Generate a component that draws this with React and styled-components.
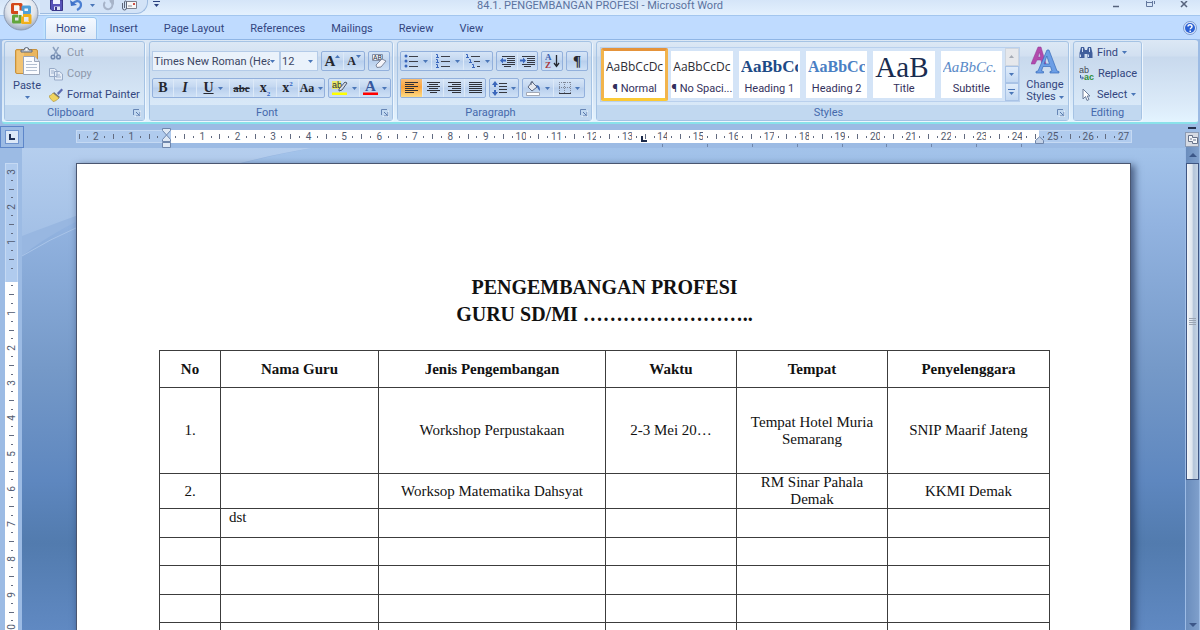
import { Fragment } from "react";
import styled, { createGlobalStyle, css } from "styled-components";

const GlobalStyle = createGlobalStyle`
  * { box-sizing: border-box; }
  body { margin: 0; overflow: hidden; }
  button, select {
    font: inherit;
    color: inherit;
    background: none;
    border: 0;
    padding: 0;
    margin: 0;
  }
  svg { display: block; flex: none; }
`;

const Window = styled.div`
  position: relative;
  display: flex;
  flex-direction: column;
  height: 100vh;
  overflow: hidden;
  background: #9cbbe4;
  color: #33467f;
  font: 11px/13px Roboto, "Open Sans", sans-serif;
`;

/* title bar */

const TitleBar = styled.header`
  display: grid;
  grid-template-columns: 1fr auto 1fr;
  height: 16px;
  flex: none;
  background: linear-gradient(#d5e5f8, #e4f1fe);
  border-bottom: 1px solid #a3c6ee;
`;

const Title = styled.h1`
  margin: 0;
  font-size: 11px;
  line-height: 12px;
  font-weight: 400;
  color: #5b73a0;
`;

const QuickAccess = styled.div`
  display: flex;
  align-items: flex-start;
  padding-left: 40px;
`;

const QuickBar = styled.div`
  display: flex;
  align-items: center;
  gap: 7px;
  height: 14px;
  padding: 0 10px 3px 10px;
  border: 1px solid #9dbbe0;
  border-top: 0;
  border-left: 0;
  border-radius: 0 0 12px 0;
  background: #d3e3f7;
`;

const QuickMore = styled.button`
  padding: 1px 5px;
`;

const WindowButtons = styled.div`
  display: flex;
  justify-content: flex-end;
  gap: 24px;
  padding-right: 11px;
  button { height: 8px; }
`;

const OfficeButton = styled.button`
  position: absolute;
  z-index: 2;
  top: -6px;
  left: 3px;
`;

/* ribbon */

const TabRow = styled.nav`
  display: flex;
  align-items: flex-end;
  height: 23px;
  flex: none;
  padding: 0 4px 0 46px;
  background: #bfdbff;
`;

const Tab = styled.button`
  height: 21px;
  padding: 0 13px;
  border-radius: 3px 3px 0 0;
  ${({ $active }) =>
    $active &&
    css`
      padding: 0 10px;
      margin-right: 1px;
      background: linear-gradient(#f4f9ff, #dfeaf7);
      box-shadow: 0 0 0 1px #9cc4ee, 0 0 3px 1px #c9f3fb;
    `}
`;

const Help = styled.button`
  margin: 0 -1px 4px auto;
`;

const Ribbon = styled.section`
  display: flex;
  gap: 4px;
  flex: none;
  height: 85px;
  margin: 0 2px;
  padding: 1px 2px;
  border: 1px solid #8fb5e5;
  border-color: #8fb5e5 #a9e4f2 #8ae2ea #a9e4f2;
  border-width: 1px 0 2px;
  border-radius: 3px;
  background: linear-gradient(#dce8f5 0, #d0dff0 16px, #c8d9ed 17px, #dcebf9 66px, #e3f4ff);
`;

const GroupBox = styled.section`
  display: flex;
  flex-direction: column;
  flex: none;
  width: ${({ $width }) => $width}px;
  border: 1px solid #a5c3e4;
  border-radius: 3px;
  background: linear-gradient(#dce8f5 0, #d2e0f1 14px, #c8d9ed 15px, #d9e9f8 64px);
  box-shadow: 1px 1px 0 #eef6fe;
`;

const GroupBody = styled.div`
  flex: 1;
  display: flex;
  min-height: 0;
`;

const GroupLabel = styled.div`
  display: flex;
  align-items: center;
  height: 15px;
  padding: 0 3px;
  background: #c1d8f0;
  color: #4569ac;
  span { flex: 1; text-align: center; }
`;

const Stack = styled.div`
  display: flex;
  flex-direction: column;
  padding-left: ${({ $inset }) => $inset || 0}px;
`;

const BigButton = styled.button`
  display: flex;
  flex: none;
  flex-direction: column;
  align-items: center;
  width: ${({ $width }) => $width}px;
  padding-top: 4px;
  line-height: 12px;
  > svg:first-child { margin-bottom: 4px; }
  > svg:last-child { margin-top: 4px; }
  span { display: flex; align-items: center; gap: 3px; }
`;

const SmallButton = styled.button`
  display: flex;
  align-items: center;
  gap: 4px;
  height: 21px;
  white-space: nowrap;
  color: ${({ disabled }) => (disabled ? "#8d98ab" : "#33467f")};
`;

const Rows = styled.div`
  display: flex;
  flex-direction: column;
  gap: 7px;
  padding: 9px 2px 0;
  width: 100%;
`;

const ToolRow = styled.div`
  display: flex;
  height: 20px;
  gap: 3px;
`;

const Combo = styled.label`
  display: flex;
  align-items: center;
  width: ${({ $width }) => $width}px;
  height: 20px;
  margin-right: ${({ $joined }) => ($joined ? "-3px" : "0")};
  padding-right: 4px;
  border: 1px solid #b4cbe8;
  background: #eaf2fb;
  color: #3b4663;
  select {
    flex: 1;
    min-width: 0;
    padding-left: 1px;
    appearance: none;
    outline: 0;
    overflow: hidden;
  }
`;

const ToolGroup = styled.div`
  display: flex;
  border: 1px solid #92b0dc;
  border-radius: 2px;
  background: linear-gradient(#d6e5f7, #c3d7f0 45%, #b8cfed 50%, #cfe1f6);
`;

const Tool = styled.button`
  display: flex;
  align-items: center;
  justify-content: center;
  gap: 4px;
  width: ${({ $width }) => $width}px;
  & + & { border-left: 1px solid #dce9f8; }
  ${({ $active }) => $active && css`
    background: linear-gradient(#f6bd77, #fba43c 45%, #fddc85);
  `}
`;

const SizeTool = styled(Tool)`
  gap: 0;
  svg { align-self: flex-start; margin-top: 3px; }
`;

const Glyph = styled.span`
  font: ${({ $size }) => $size || 14}px/18px "Liberation Serif", serif;
  font-weight: 700;
  font-style: ${({ $italic }) => ($italic ? "italic" : "normal")};
  text-decoration: ${({ $line }) => $line || "none"};
  color: #25272f;
  sub, sup { font-size: 7px; line-height: 0; color: #2d5fc0; }
`;

/* style gallery */

const Gallery = styled.div`
  display: flex;
  flex: 1;
  min-width: 0;
  margin: 5px 2px 3px 3px;
  border: 1px solid #b9d0ed;
  background: #d4e4f7;
`;

const StyleTile = styled.button`
  flex: 1;
  min-width: 0;
  display: flex;
  flex-direction: column;
  border: 3px solid transparent;
  ${({ $active }) => $active && css`
    border-color: #e5933a #f2b44c #fbc935;
    border-radius: 2px;
  `}
`;

const TileFace = styled.span`
  display: flex;
  flex-direction: column;
  align-self: stretch;
  flex: 1;
  overflow: hidden;
  background: #fff;
`;

const Preview = styled.span`
  height: 30px;
  margin: 0 2px;
  overflow: hidden;
  text-align: left;
  white-space: nowrap;
  line-height: 32px;
  font-family: ${({ $serif }) =>
    $serif ? '"Liberation Serif", serif' : '"Open Sans", sans-serif'};
  font-size: ${({ $size }) => $size}px;
  font-weight: ${({ $bold }) => ($bold ? 700 : 400)};
  font-style: ${({ $italic }) => ($italic ? "italic" : "normal")};
  color: ${({ $color }) => $color};
`;

const TileName = styled.span`
  text-align: center;
  white-space: nowrap;
  line-height: 15px;
  color: #33305c;
`;

const GalleryScroll = styled.div`
  display: flex;
  flex-direction: column;
  width: 14px;
  button {
    flex: 1;
    display: flex;
    align-items: center;
    justify-content: center;
    border: 1px solid #a9c3e6;
    background: linear-gradient(#e0ecfa, #c3d8f2);
  }
  button:first-child { background: #e6e8ec; border-color: #cdd5df; }
`;

/* rulers and document */

const Main = styled.div`
  display: flex;
  flex: 1;
  min-height: 0;
  padding-top: 2px;
`;

const Editor = styled.div`
  display: flex;
  flex-direction: column;
  flex: 1;
  min-width: 0;
`;

const RulerRow = styled.div`
  display: flex;
  align-items: flex-start;
  height: 22px;
  flex: none;
`;

const TabSelector = styled.button`
  display: flex;
  align-items: center;
  justify-content: center;
  width: 24px;
  height: 22px;
  margin-right: 52px;
  border: 1px solid #5d86c9;
  span {
    display: flex;
    align-items: center;
    justify-content: center;
    width: 14px;
    height: 14px;
    border: 1px solid #6f94cf;
    background: #dce8f8;
  }
`;

const HRuler = styled.div`
  position: relative;
  display: flex;
  flex: 1;
  height: 13px;
  margin: 4px 53px 0 0;
  padding-right: 4px;
  background: #b0cbee;
  box-shadow: inset 0 0 0 1px #c5d9f3;
`;

const VRuler = styled.div`
  display: flex;
  flex-direction: column;
  width: 13px;
  margin: 15px 4px -4px 5px;
  padding-top: 4px;
  background: #b0cbee;
  box-shadow: inset 0 0 0 1px #c5d9f3;
`;

const Mark = styled.span`
  display: flex;
  align-items: center;
  justify-content: center;
  flex: ${({ $half }) => ($half ? 3 : 4)} 1 0;
  min-width: 0;
  min-height: 0;
  font-size: 10px;
  line-height: 13px;
  color: #515a70;
  background: ${({ $inside }) => ($inside ? "#fff" : "none")};
  ${({ $vertical }) => $vertical && css`
    writing-mode: sideways-lr;
    line-height: 12px;
  `}
`;

const Tick = styled.i`
  flex: none;
  background: #626b80;
  width: ${({ $long, $vertical }) => ($long && $vertical ? 5 : $vertical ? 2 : 1)}px;
  height: ${({ $long, $vertical }) => ($long && !$vertical ? 5 : $vertical ? 1 : 2)}px;
`;

const Indent = styled.span`
  position: absolute;
  top: ${({ $top }) => $top}px;
  left: ${({ $left }) => $left}%;
  margin-left: -5px;
`;

const DefaultTabs = styled.span`
  position: absolute;
  top: 14px;
  left: 55%;
  right: 10%;
  height: 3px;
  display: flex;
  justify-content: space-between;
  padding: 0 4px 0 5px;
  i { width: 1px; background: #6f86ab; }
`;

const Workspace = styled.div`
  display: flex;
  flex: 1;
  min-height: 0;
  overflow: hidden;
`;

const Canvas = styled.main`
  position: relative;
  display: flex;
  flex: 1;
  min-width: 0;
  padding: 15px 54px 0;
  background: linear-gradient(#a3c3ea 0, #92b3e0 16%, #7599c8 46%, #5e87bf 69%, #527bae 82%, #6089c2 100%);
`;

const Swoosh = styled.svg`
  position: absolute;
  top: 0;
  left: 0;
  width: 290px;
  height: 110px;
`;

const Page = styled.article`
  position: relative;
  flex: 1;
  min-width: 0;
  padding: 110px 80px 0 82px;
  border: 1px solid #4a5670;
  border-bottom: 0;
  background: #fff;
  box-shadow: 3px 3px 7px 1px rgba(20, 35, 70, 0.6);
  color: #111;
  font: 15px/17px "Liberation Serif", "Times New Roman", serif;
`;

const Heading = styled.h2`
  margin: 0 0 22px;
  font-size: 20px;
  line-height: 27px;
  text-align: center;
`;

const Table = styled.table`
  width: 100%;
  border-collapse: collapse;
  table-layout: fixed;
  th, td {
    padding: 0 8px;
    border: 1px solid #3c3c3c;
    text-align: center;
    vertical-align: middle;
  }
`;

const Row = styled.tr`
  height: ${({ $height }) => $height}px;
`;

const Note = styled.td`
  && { text-align: left; vertical-align: top; }
`;

const ScrollColumn = styled.div`
  display: flex;
  flex-direction: column;
  flex: none;
  width: 14px;
  margin-right: 1px;
`;

const Splitter = styled.div`
  height: 2px;
  margin: 1px 3px 3px;
  background: #26344f;
`;

const RulerToggle = styled.button`
  display: flex;
  align-items: center;
  justify-content: center;
  height: 15px;
  flex: none;
  border: 1px solid #8c9bb4;
  background: #d5dae3;
`;

const Track = styled.div`
  display: flex;
  flex-direction: column;
  flex: 1;
  min-height: 0;
  border-left: 1px solid #9dbce6;
  background: linear-gradient(90deg, #6a8dbd, #7f9fcb);
`;

const ScrollArrow = styled.button`
  display: flex;
  align-items: center;
  justify-content: center;
  height: ${({ $height }) => $height}px;
  flex: none;
`;

const Thumb = styled.div`
  display: flex;
  flex: 316 1 0;
  align-items: center;
  justify-content: center;
  border: 1px solid #3f5682;
  background: linear-gradient(90deg, #f2f5f9, #dfe6ee 45%, #b4c5d9 60%, #c6d5e6);
`;

const ThumbRest = styled.div`
  flex: 141 1 0;
`;

const Arrow = ({ up, color = "#4a76b8" }) => (
  <svg width="5" height="3" viewBox="0 0 5 3" aria-hidden="true">
    <path d={up ? "M0 3h5L2.5 0z" : "M0 0h5L2.5 3z"} fill={color} />
  </svg>
);

const MoreArrow = ({ color = "#4a76b8" }) => (
  <svg width="7" height="7" viewBox="0 0 7 7" aria-hidden="true">
    <path d="M0 .5h7" stroke={color} />
    <path d="M1 3h5L3.500 6z" fill={color} />
  </svg>
);

const Launcher = () => (
  <svg width="8" height="8" viewBox="0 0 8 8" aria-hidden="true">
    <path d="M.5 6V.5H6" fill="none" stroke="#6786b5" />
    <path d="M3 3l3 3M7 3v4H3" fill="none" stroke="#5878ab" />
    <path d="M1.500 7.500h6v-6" fill="none" stroke="#f4f9ff" strokeWidth=".6" />
  </svg>
);

const OfficeLogo = () => (
  <svg width="37" height="37" viewBox="0 0 37 37" aria-hidden="true">
    <defs>
      <radialGradient id="orb" cx=".5" cy=".35" r=".65">
        <stop offset="0" stopColor="#fff" />
        <stop offset=".65" stopColor="#dfe4ec" />
        <stop offset="1" stopColor="#9caac0" />
      </radialGradient>
    </defs>
    <circle cx="18" cy="19" r="17" fill="url(#orb)" stroke="#8d9bb3" />
    <g fill="none" strokeWidth="3" strokeLinejoin="round">
      <path d="M15 18.500H9.500v-8H18v6" stroke="#d3481c" />
      <path d="M20 18.500h6.500v-5.500H20v4" stroke="#4f9fd8" />
      <path d="M17 21v7h-6.500v-6H15" stroke="#62a63c" />
      <path d="M20 21.500h7v7h-7.500v-6" stroke="#f0b01c" />
    </g>
    <path d="M11 11.500h5M21 27.500h5" stroke="#fbd9a0" />
  </svg>
);

const SaveIcon = () => (
  <svg width="13" height="11" viewBox="0 0 13 11" aria-hidden="true">
    <path d="M.5 0h12v10.500H2L.5 9z" fill="#5753b8" stroke="#3a3789" />
    <path d="M3 0h7v4H3z" fill="#eef2ff" />
    <path d="M4 6.500h6V10H4z" fill="#dfe4f5" />
    <path d="M5 7h2v3H5z" fill="#3a3789" />
  </svg>
);

const UndoIcon = ({ redo }) =>
  redo ? (
    <svg width="12" height="11" viewBox="0 0 12 11" aria-hidden="true">
      <path d="M8 1a4.300 4.300 0 1 1-5 1" fill="none" stroke="#a7b4c9" strokeWidth="2" />
      <path d="M7 0h5v5z" fill="#a7b4c9" />
    </svg>
  ) : (
    <svg width="13" height="11" viewBox="0 0 13 11" aria-hidden="true">
      <path d="M3 3c5-4 8-1 8 2S9 9 7 10" fill="none" stroke="#4b7fd2" strokeWidth="2.200" />
      <path d="M0 0l1 6 6-1z" fill="#3d70c8" />
    </svg>
  );

const MailIcon = () => (
  <svg width="16" height="11" viewBox="0 0 16 11" aria-hidden="true">
    <path d="M5.500 1.500h10v7h-10z" fill="#f7f7f7" stroke="#7c7f8c" />
    <path d="M7 6h4" stroke="#8b8f9c" />
    <path d="M12 3h2v2h-2z" fill="#d04e42" />
    <path d="M1.500 3v5a2 2 0 0 0 4 0V2a1 1 0 0 0-2 0v6" fill="none" stroke="#5c6577" />
  </svg>
);

const HelpIcon = () => (
  <svg width="14" height="14" viewBox="0 0 14 14" aria-hidden="true">
    <circle cx="7" cy="7" r="6.500" fill="#dce8fa" stroke="#7d9bd0" />
    <circle cx="7" cy="7" r="5" fill="#2b61d4" />
    <path d="M5 5.500c0-2.500 4-2.300 4 0C9 7 7.200 7 7.200 8.300M7.200 9.500V11" fill="none" stroke="#fff" strokeWidth="1.500" />
  </svg>
);

const PasteIcon = () => (
  <svg width="27" height="30" viewBox="0 0 27 30" aria-hidden="true">
    <rect x="1.500" y="3.500" width="22" height="24" rx="1.500" fill="#eab65e" stroke="#c9923c" />
    <path d="M3 5h7v22H3z" fill="#f3c97e" opacity=".7" />
    <path d="M7 6V4h3a2.500 2.500 0 0 1 5 0h3v2z" fill="#ced3da" stroke="#5e6878" />
    <circle cx="12.500" cy="3.500" r="1" fill="#fff" />
    <path d="M9.500 10.500h11l5 5v13h-16z" fill="#fbfcff" stroke="#9aa5b8" />
    <path d="M20.500 10.500v5h5" fill="#dbe3ef" stroke="#9aa5b8" />
    <path d="M12 15.500h6M12 18.500h11M12 21.500h11M12 24.500h11" stroke="#b3bfd1" />
  </svg>
);

const CutIcon = () => (
  <svg width="14" height="14" viewBox="0 0 14 14" aria-hidden="true">
    <path d="M4 1l5 8M9.500 1L5 9" fill="none" stroke="#8ba0bf" strokeWidth="1.500" />
    <circle cx="4" cy="11" r="1.800" fill="none" stroke="#7089b0" strokeWidth="1.500" />
    <circle cx="9.500" cy="11" r="1.800" fill="none" stroke="#7089b0" strokeWidth="1.500" />
  </svg>
);

const CopyIcon = () => (
  <svg width="14" height="14" viewBox="0 0 14 14" aria-hidden="true">
    <path d="M.5 1.500h5l2.500 2v6H.5zM5.500 4.500h5l3 2.500v6h-8z" fill="#e4ecf7" stroke="#97aac7" />
    <path d="M2 4h3M2 6h3M7 8h4M7 10h5" stroke="#9fb2ce" />
  </svg>
);

const PainterIcon = () => (
  <svg width="14" height="14" viewBox="0 0 14 14" aria-hidden="true">
    <path d="M8 5l4.500-4.500L14 2 9.500 7z" fill="#5b6bb0" />
    <path d="M5 4l6 5-2 2-6-4z" fill="#6c6f7c" />
    <path d="M4 5l6 5c-2 2-4 3.500-6 3.500C3 12 1 11 0 8c1.500-.5 3-1.500 4-3z" fill="#f0d35f" stroke="#a88f35" strokeWidth=".6" />
  </svg>
);

const EraserIcon = () => (
  <svg width="16" height="16" viewBox="0 0 16 16" aria-hidden="true">
    <path d="M1.500 1.500h10v6h-10z" fill="#eef2f8" stroke="#8390a8" />
    <text x="2" y="7" fontSize="7" fontFamily="Roboto" fill="#2b3345">AB</text>
    <path d="M5 12l6-6 4 2-5 6-4 .5z" fill="#f5f5fa" stroke="#7e879b" />
  </svg>
);

/* rows of a list: each has a coloured bullet or digit and a black line */
const ListIcon = ({ kind }) => {
  const indent = kind === "multi" ? 3 : 0;
  return (
    <svg width="15" height="14" viewBox="0 0 15 14" aria-hidden="true">
      {[2, 7, 12].map((y, i) => (
        <Fragment key={y}>
          {kind === "bullets" ? (
            <circle cx="2" cy={y} r="1.500" fill="#3a66bb" />
          ) : (
            <path d={`M${i * indent} ${y - 1.5}h1.500v3M${i * indent} ${y + 1.5}h3`} fill="none" stroke="#3a66bb" />
          )}
          <path d={`M${5 + i * indent} ${y + 0.5}h${9 - i * indent}`} stroke="#3c3f49" />
        </Fragment>
      ))}
    </svg>
  );
};

const alignments = {
  left: [[0, 13], [0, 9], [0, 13], [0, 9], [0, 13], [0, 9]],
  center: [[0, 13], [2, 9], [0, 13], [2, 9], [0, 13], [3, 7]],
  right: [[0, 13], [4, 9], [0, 13], [4, 9], [0, 13], [4, 9]],
  justify: [[0, 13], [0, 13], [0, 13], [0, 13], [0, 13], [0, 13]],
};

const AlignIcon = ({ align }) => (
  <svg width="13" height="12" viewBox="0 0 13 12" aria-hidden="true">
    {alignments[align].map(([x, w], i) => (
      <path key={i} d={`M${x} ${i * 2 + 0.5}h${w}`} stroke="#2f3138" />
    ))}
  </svg>
);

const IndentIcon = ({ more }) => (
  <svg width="15" height="13" viewBox="0 0 15 13" aria-hidden="true">
    <path d="M2 1.500h13M7 3.500h8M7 5.500h8M7 7.500h8M2 9.500h13M4 11.500h7" stroke="#353841" />
    <path d={more ? "M6 5.500L3 2.500v2H0v2h3v2z" : "M0 5.500l3-3v2h3v2H3v2z"} fill="#3a66bb" />
  </svg>
);

const SortIcon = () => (
  <svg width="15" height="16" viewBox="0 0 15 16" aria-hidden="true">
    <text x="0" y="7" fontSize="9" fontWeight="700" fontFamily="Liberation Serif" fill="#3a5fae">A</text>
    <text x="0" y="15" fontSize="9" fontWeight="700" fontFamily="Liberation Serif" fill="#a8373c">Z</text>
    <path d="M11.500 2v10M9 10l2.500 3.500L14 10" fill="none" stroke="#25272f" strokeWidth="1.300" />
  </svg>
);

const SpacingIcon = () => (
  <svg width="15" height="15" viewBox="0 0 15 15" aria-hidden="true">
    <path d="M3 0L0 4h2v2h2V4h2zM3 15l-3-4h2V9h2v2h2z" fill="#3a66bb" />
    <path d="M7 2.500h8M7 5.500h8M7 8.500h8M7 11.500h8" stroke="#35383f" />
  </svg>
);

const BucketIcon = () => (
  <svg width="15" height="15" viewBox="0 0 15 15" aria-hidden="true">
    <path d="M6 1l5 5-5 4-4-4z" fill="#e6e9ef" stroke="#5f6a80" />
    <path d="M5 4V1.500a1 1 0 0 1 2 0" fill="none" stroke="#5f6a80" />
    <path d="M10 4c3 0 4 2 4 6-1-1-2-2-3-4z" fill="#3f69b4" />
    <path d="M.5 11.500h13v3H.5z" fill="#fff" stroke="#a3a9b5" />
  </svg>
);

const BorderIcon = () => (
  <svg width="12" height="12" viewBox="0 0 12 12" aria-hidden="true">
    <path d="M.5 0v11M5.500 0v11M11.500 0v11M0 .5h12M0 5.500h12" stroke="#7e8797" strokeDasharray="1 1" />
    <path d="M0 11.500h12" stroke="#353841" />
  </svg>
);

const HighlightIcon = () => (
  <svg width="16" height="16" viewBox="0 0 16 16" aria-hidden="true">
    <path d="M0 1h9v8H0z" fill="#e8ea68" />
    <text x="0" y="8" fontSize="9" fontFamily="Liberation Sans" fill="#2d3038">ab</text>
    <path d="M7 9l6-7 2 1-5 7-3 1z" fill="#d5dce8" stroke="#4d596e" />
    <path d="M0 12.500h15V15H0z" fill="#ff0" />
  </svg>
);

const FontColorIcon = () => (
  <svg width="15" height="16" viewBox="0 0 15 16" aria-hidden="true">
    <text x="2" y="11" fontSize="15" fontWeight="700" fontFamily="Liberation Serif" fill="#35589e">A</text>
    <path d="M0 12.500h15V15H0z" fill="red" />
  </svg>
);

const ChangeStylesIcon = () => (
  <svg width="29" height="29" viewBox="0 0 29 29" aria-hidden="true">
    <path d="M0 18L7 1h3l5 17h-4l-1-4H6l-2 4zM7 11h2.500L8.500 6z" fill="#b24aad" stroke="#8f3a94" strokeWidth=".5" />
    <path d="M5 27v-1.500l2-.5L16 4h2l8 21 2 .5V27h-9v-1.500l2-.5-1.500-4.500H12L10.500 25l2 .5V27zM13 18h5.500L15.800 10z" fill="#6c9ee6" stroke="#376bb9" strokeWidth=".7" />
  </svg>
);

const FindIcon = () => (
  <svg width="14" height="13" viewBox="0 0 14 13" aria-hidden="true">
    <path d="M2 1h3l1 3h2l1-3h3l1.500 6v5h-5V8h-3v4h-5V7z" fill="#415f9c" />
    <path d="M1.500 8.500v2.500M3.500 2v4M10.500 2v4M9.500 8.500v2.500" stroke="#cfdcf2" />
  </svg>
);

const ReplaceIcon = () => (
  <svg width="15" height="15" viewBox="0 0 15 15" aria-hidden="true">
    <text x="0" y="7" fontSize="9" fontFamily="Liberation Sans" fill="#454a55">ab</text>
    <text x="5" y="14" fontSize="9" fontWeight="700" fontFamily="Liberation Sans" fill="#2f8f3a">ac</text>
    <path d="M1.500 9v3H4M3 10.500L4.500 12 3 13.500" fill="none" stroke="#3c61a8" />
  </svg>
);

const SelectIcon = () => (
  <svg width="14" height="14" viewBox="0 0 14 14" aria-hidden="true">
    <path d="M4 1v10l2.500-2.500L8 12.500l2-1-1.800-3.500H11z" fill="#fff" stroke="#6c7c99" />
  </svg>
);

const Group = ({ label, width, launcher, children }) => (
  <GroupBox $width={width} aria-label={label}>
    <GroupBody>{children}</GroupBody>
    <GroupLabel>
      <span>{label}</span>
      {launcher && (
        <button aria-label={`${label} options`}>
          <Launcher />
        </button>
      )}
    </GroupLabel>
  </GroupBox>
);

const tabs = ["Home", "Insert", "Page Layout", "References", "Mailings", "Review", "View"];

const styles = [
  { name: "¶ Normal", sample: "AaBbCcDc", size: 12, color: "#2c2c34" },
  { name: "¶ No Spaci...", sample: "AaBbCcDc", size: 12, color: "#2c2c34" },
  { name: "Heading 1", sample: "AaBbCc", size: 17, color: "#1d4a86", serif: true, bold: true },
  { name: "Heading 2", sample: "AaBbCc", size: 16, color: "#4a80c4", serif: true, bold: true },
  { name: "Title", sample: "AaB", size: 29, color: "#1a2c50", serif: true },
  { name: "Subtitle", sample: "AaBbCc.", size: 15, color: "#5a8ac8", serif: true, italic: true },
];

const columns = [
  { title: "No", width: 61 },
  { title: "Nama Guru", width: 158 },
  { title: "Jenis Pengembangan", width: 227 },
  { title: "Waktu", width: 131 },
  { title: "Tempat", width: 151 },
  { title: "Penyelenggara", width: 162 },
];
const totalWidth = columns.reduce((sum, c) => sum + c.width, 0);

const entries = [
  {
    height: 86,
    cells: ["1.", "", "Workshop Perpustakaan", "2-3 Mei 20…", "Tempat Hotel Muria Semarang", "SNIP Maarif Jateng"],
  },
  {
    height: 35,
    cells: ["2.", "", "Worksop Matematika Dahsyat", "", "RM Sinar Pahala Demak", "KKMI Demak"],
  },
];
const emptyRows = [28, 29, 28, 29];

/* one mark per quarter of a centimetre, zero at the margin */
const Marks = ({ from, to, insideTo, vertical }) => {
  const quarters = Array.from({ length: to - from + 1 }, (_, i) => from + i);
  return quarters.map((q) => (
    <Mark
      key={q}
      $inside={q > 0 && q <= insideTo}
      $vertical={vertical}
      $half={!vertical && q === from}
    >
      {q === 0 ? null : q % 4 === 0 ? (
        Math.abs(q / 4)
      ) : (
        <Tick $long={q % 2 === 0} $vertical={vertical} />
      )}
    </Mark>
  ));
};

const ClipboardGroup = () => (
  <Group label="Clipboard" width={141} launcher>
    <BigButton $width={44}>
      <PasteIcon />
      <span>Paste</span>
      <Arrow />
    </BigButton>
    <Stack>
      <SmallButton disabled><CutIcon />Cut</SmallButton>
      <SmallButton disabled><CopyIcon />Copy</SmallButton>
      <SmallButton><PainterIcon />Format Painter</SmallButton>
    </Stack>
  </Group>
);

const FontGroup = () => (
  <Group label="Font" width={244} launcher>
    <Rows>
      <ToolRow>
        <Combo $width={128} $joined>
          <select aria-label="Font">
            <option>Times New Roman (Headings)</option>
          </select>
          <Arrow />
        </Combo>
        <Combo $width={42}>
          <select aria-label="Font size">
            <option>12</option>
          </select>
          <Arrow />
        </Combo>
        <ToolGroup>
          <SizeTool $width={21} aria-label="Grow font"><Glyph $size={15}>A</Glyph><Arrow up /></SizeTool>
          <SizeTool $width={21} aria-label="Shrink font"><Glyph $size={12}>A</Glyph><Arrow /></SizeTool>
        </ToolGroup>
        <ToolGroup>
          <Tool $width={20} aria-label="Clear formatting"><EraserIcon /></Tool>
        </ToolGroup>
      </ToolRow>
      <ToolRow>
        <ToolGroup>
          <Tool $width={20} aria-label="Bold"><Glyph>B</Glyph></Tool>
          <Tool $width={23} aria-label="Italic"><Glyph $italic>I</Glyph></Tool>
          <Tool $width={33} aria-label="Underline"><Glyph $line="underline">U</Glyph><Arrow /></Tool>
          <Tool $width={24} aria-label="Strikethrough"><Glyph $size={11} $line="line-through">abc</Glyph></Tool>
          <Tool $width={23} aria-label="Subscript"><Glyph>x<sub>2</sub></Glyph></Tool>
          <Tool $width={22} aria-label="Superscript"><Glyph>x<sup>2</sup></Glyph></Tool>
          <Tool $width={26} aria-label="Change case"><Glyph $size={12}>Aa</Glyph><Arrow /></Tool>
        </ToolGroup>
        <ToolGroup>
          <Tool $width={30} aria-label="Highlight"><HighlightIcon /><Arrow /></Tool>
          <Tool $width={31} aria-label="Font color"><FontColorIcon /><Arrow /></Tool>
        </ToolGroup>
      </ToolRow>
    </Rows>
  </Group>
);

const ParagraphGroup = () => (
  <Group label="Paragraph" width={195} launcher>
    <Rows>
      <ToolRow>
        <ToolGroup>
          <Tool $width={30} aria-label="Bullets"><ListIcon kind="bullets" /><Arrow /></Tool>
          <Tool $width={32} aria-label="Numbering"><ListIcon kind="numbers" /><Arrow /></Tool>
          <Tool $width={29} aria-label="Multilevel list"><ListIcon kind="multi" /><Arrow /></Tool>
        </ToolGroup>
        <ToolGroup>
          <Tool $width={20} aria-label="Decrease indent"><IndentIcon /></Tool>
          <Tool $width={20} aria-label="Increase indent"><IndentIcon more /></Tool>
        </ToolGroup>
        <ToolGroup>
          <Tool $width={20} aria-label="Sort"><SortIcon /></Tool>
        </ToolGroup>
        <ToolGroup>
          <Tool $width={20} aria-label="Show marks"><Glyph $size={15}>¶</Glyph></Tool>
        </ToolGroup>
      </ToolRow>
      <ToolRow>
        <ToolGroup>
          {Object.keys(alignments).map((align) => (
            <Tool key={align} $width={21} $active={align === "left"} aria-label={`Align ${align}`}>
              <AlignIcon align={align} />
            </Tool>
          ))}
        </ToolGroup>
        <ToolGroup>
          <Tool $width={28} aria-label="Line spacing"><SpacingIcon /><Arrow /></Tool>
        </ToolGroup>
        <ToolGroup>
          <Tool $width={30} aria-label="Shading"><BucketIcon /><Arrow /></Tool>
          <Tool $width={31} aria-label="Borders"><BorderIcon /><Arrow /></Tool>
        </ToolGroup>
      </ToolRow>
    </Rows>
  </Group>
);

const StylesGroup = () => (
  <Group label="Styles" width={473} launcher>
    <Gallery>
      {styles.map((s, i) => (
        <StyleTile key={s.name} $active={i === 0}>
          <TileFace>
            <Preview $size={s.size} $color={s.color} $serif={s.serif} $bold={s.bold} $italic={s.italic}>
              {s.sample}
            </Preview>
            <TileName>{s.name}</TileName>
          </TileFace>
        </StyleTile>
      ))}
      <GalleryScroll>
        <button aria-label="Previous styles"><Arrow up color="#a6abb5" /></button>
        <button aria-label="Next styles"><Arrow /></button>
        <button aria-label="More styles"><MoreArrow /></button>
      </GalleryScroll>
    </Gallery>
    <BigButton $width={46}>
      <ChangeStylesIcon />
      <span>Change</span>
      <span>Styles <Arrow /></span>
    </BigButton>
  </Group>
);

const EditingGroup = () => (
  <Group label="Editing" width={69}>
    <Stack $inset={5}>
      <SmallButton><FindIcon />Find <Arrow /></SmallButton>
      <SmallButton><ReplaceIcon />Replace</SmallButton>
      <SmallButton><SelectIcon />Select <Arrow /></SmallButton>
    </Stack>
  </Group>
);

export default function App() {
  return (
    <Window>
      <GlobalStyle />
      <TitleBar>
        <QuickAccess>
          <QuickBar>
            <button aria-label="Save"><SaveIcon /></button>
            <button aria-label="Undo"><UndoIcon /></button>
            <button aria-label="Undo history"><Arrow /></button>
            <button aria-label="Redo"><UndoIcon redo /></button>
            <button aria-label="E-mail"><MailIcon /></button>
          </QuickBar>
          <QuickMore aria-label="Customize toolbar"><MoreArrow color="#2b4280" /></QuickMore>
        </QuickAccess>
        <Title>84.1. PENGEMBANGAN PROFESI - Microsoft Word</Title>
        <WindowButtons>
          <button aria-label="Minimize">
            <svg width="10" height="7" viewBox="0 0 10 7"><path d="M2 5.500h6" stroke="#56637d" strokeWidth="1.500" /></svg>
          </button>
          <button aria-label="Restore">
            <svg width="10" height="7" viewBox="0 0 10 7"><path d="M1.500 0v5.500h6V0M1 1.500h7M9.500 0v3" fill="none" stroke="#64789e" /></svg>
          </button>
          <button aria-label="Close">
            <svg width="10" height="7" viewBox="0 0 10 7"><path d="M2 0l6 6M8 0L2 6" stroke="#56637d" strokeWidth="1.500" /></svg>
          </button>
        </WindowButtons>
      </TitleBar>
      <OfficeButton aria-label="Office"><OfficeLogo /></OfficeButton>
      <TabRow>
        {tabs.map((tab, i) => (
          <Tab key={tab} $active={i === 0}>{tab}</Tab>
        ))}
        <Help aria-label="Help"><HelpIcon /></Help>
      </TabRow>
      <Ribbon>
        <ClipboardGroup />
        <FontGroup />
        <ParagraphGroup />
        <StylesGroup />
        <EditingGroup />
      </Ribbon>
      <Main>
        <Editor>
          <RulerRow>
            <TabSelector aria-label="Tab stop type">
              <span>
                <svg width="6" height="6" viewBox="0 0 6 6"><path d="M1 0v5h5" fill="none" stroke="#1e2f55" strokeWidth="2" /></svg>
              </span>
            </TabSelector>
            <HRuler>
              <Marks from={-10} to={108} insideTo={98} />
              <Indent $top={-2} $left={8.6}>
                <svg width="9" height="20" viewBox="0 0 9 20">
                  <path d="M.5.5h8v2L4.500 7l-4-4.500zM.5 13.500v-2L4.500 7l4 4.500v2zM.5 14.500h8v5h-8z" fill="#dfe8f4" stroke="#6f86ab" />
                </svg>
              </Indent>
              <Indent $top={6} $left={91.3}>
                <svg width="9" height="8" viewBox="0 0 9 8">
                  <path d="M.5 7.500V4.500L4.500.8l4 3.700v3z" fill="#c5d3e8" stroke="#6f86ab" />
                </svg>
              </Indent>
              <Indent $top={6} $left={54}>
                <svg width="6" height="6" viewBox="0 0 6 6"><path d="M1 0v5h5" fill="none" stroke="#1c2a4a" strokeWidth="2" /></svg>
              </Indent>
              <DefaultTabs>
                {Array.from({ length: 9 }, (_, i) => <i key={i} />)}
              </DefaultTabs>
            </HRuler>
          </RulerRow>
          <Workspace>
            <VRuler>
              <Marks from={-12} to={40} insideTo={40} vertical />
            </VRuler>
            <Canvas>
              <Swoosh viewBox="0 0 290 110" aria-hidden="true">
                <defs>
                  <linearGradient id="sky" x1="0" y1="0" x2="0" y2="1">
                    <stop offset="0" stopColor="#b5ceee" />
                    <stop offset="1" stopColor="#a3c0e6" />
                  </linearGradient>
                </defs>
                <path d="M0 0h290C190 18 60 58 0 108z" fill="#98b7e1" />
                <path d="M0 108Q28 91 56 79" fill="none" stroke="#a9c4e8" />
                <path d="M0 0h290C190 16 80 58 0 88z" fill="url(#sky)" />
              </Swoosh>
              <Page>
                <Heading>
                  PENGEMBANGAN PROFESI
                  <br />
                  GURU SD/MI ……………………..
                </Heading>
                <Table>
                  <colgroup>
                    {columns.map((c) => (
                      <col key={c.title} style={{ width: `${(c.width / totalWidth) * 100}%` }} />
                    ))}
                  </colgroup>
                  <thead>
                    <Row $height={37}>
                      {columns.map((c) => <th key={c.title} scope="col">{c.title}</th>)}
                    </Row>
                  </thead>
                  <tbody>
                    {entries.map((entry) => (
                      <Row key={entry.cells[0]} $height={entry.height}>
                        {entry.cells.map((cell, i) => <td key={i}>{cell}</td>)}
                      </Row>
                    ))}
                    <Row $height={29}>
                      <td />
                      <Note>dst</Note>
                      <td /><td /><td /><td />
                    </Row>
                    {emptyRows.map((height, r) => (
                      <Row key={r} $height={height}>
                        {columns.map((c) => <td key={c.title} />)}
                      </Row>
                    ))}
                  </tbody>
                </Table>
              </Page>
            </Canvas>
          </Workspace>
        </Editor>
        <ScrollColumn>
          <Splitter />
          <RulerToggle aria-label="View ruler">
            <svg width="11" height="11" viewBox="0 0 11 11"><path d="M1.500 1.500h4v2h5v6h-5v-2h-4zM4 4v2M6 6h3" fill="#f5f7fa" stroke="#66728a" /></svg>
          </RulerToggle>
          <Track>
            <ScrollArrow $height={16} aria-label="Scroll up">
              <svg width="8" height="4" viewBox="0 0 8 4"><path d="M0 4h8L4 0z" fill="#3c5788" /></svg>
            </ScrollArrow>
            <Thumb>
              <svg width="7" height="7" viewBox="0 0 7 7"><path d="M0 .5h7M0 2.500h7M0 4.500h7M0 6.500h7" stroke="#9ba5b3" /></svg>
            </Thumb>
            <ThumbRest />
            <ScrollArrow $height={10} aria-label="Scroll down">
              <svg width="8" height="4" viewBox="0 0 8 4"><path d="M0 0h8L4 4z" fill="#3c5788" /></svg>
            </ScrollArrow>
          </Track>
        </ScrollColumn>
      </Main>
    </Window>
  );
}
